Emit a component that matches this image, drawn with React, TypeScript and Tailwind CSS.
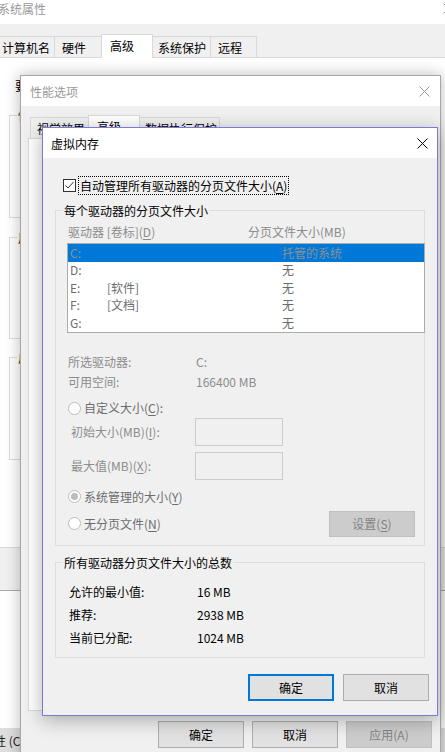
import React from 'react';

// Windows 10 "虚拟内存" dialog stacked on 性能选项 and 系统属性

function CloseX({ color }: { color: string }) {
  return (
    <svg width="11" height="11" viewBox="0 0 11 11" className="shrink-0">
      <path d="M0.5 0.5 L10.5 10.5 M10.5 0.5 L0.5 10.5" stroke={color} strokeWidth="1" fill="none" />
    </svg>
  );
}

function Checkbox() {
  return (
    <svg width="13" height="13" viewBox="0 0 13 13" className="shrink-0">
      <rect x="0.5" y="0.5" width="12" height="12" fill="#ffffff" stroke="#333333" />
      <path d="M2.5 6.5 L5 9 L10.5 3" fill="none" stroke="#333333" strokeWidth="1" />
    </svg>
  );
}

function Radio({ checked = false }: { checked?: boolean }) {
  return (
    <svg width="13" height="13" viewBox="0 0 13 13" className="shrink-0">
      <circle cx="6.5" cy="6.5" r="6" fill="#ffffff" stroke="#bcbcbc" />
      {checked && <circle cx="6.5" cy="6.5" r="3.5" fill="#bcbcbc" />}
    </svg>
  );
}

function Key({ k }: { k: string }) {
  return <span className="underline underline-offset-2 decoration-1">{k}</span>;
}

interface TabProps {
  label: string;
  width: string;
  pad: string;
  selected?: boolean;
  first?: boolean;
}

function Tab({ label, width, pad, selected, first }: TabProps) {
  return (
    <div
      className={`${width} ${pad} ${first ? '' : '-ml-[1px]'} flex items-center border-t border-l border-r border-[#d9d9d9] leading-[17px] ${
        selected ? 'relative z-10 h-[24px] -mb-[1px] bg-white pb-[3px]' : 'h-[21px] bg-[#f0f0f0]'
      }`}
    >
      {label}
    </div>
  );
}

const drives = [
  { letter: 'C:', label: '', size: '托管的系统', selected: true },
  { letter: 'D:', label: '', size: '无' },
  { letter: 'E:', label: '[软件]', size: '无' },
  { letter: 'F:', label: '[文档]', size: '无' },
  { letter: 'G:', label: '', size: '无' },
];

const totals = [
  { label: '允许的最小值:', value: '16 MB' },
  { label: '推荐:', value: '2938 MB' },
  { label: '当前已分配:', value: '1024 MB' },
];

function SystemProperties() {
  return (
    <div className="absolute z-[1] left-[-12px] top-[-6px] w-[470px] h-[597px] border border-[#aaaaaa] bg-[#f0f0f0] flex flex-col">
      <div className="h-[29px] bg-white flex items-center justify-between pl-[9px] pr-[3px] pb-[3px]">
        <span className="text-[#999999] leading-[17px]">系统属性</span>
        <CloseX color="#999999" />
      </div>
      <div className="h-[33px] flex items-end pl-[5px] text-black">
        <Tab label="计算机名" width="w-[61px]" pad="pl-[7px]" first />
        <Tab label="硬件" width="w-[48px]" pad="pl-[7px]" />
        <Tab label="高级" width="w-[52px]" pad="pl-[8px]" selected />
        <Tab label="系统保护" width="w-[59px]" pad="pl-[5px]" />
        <Tab label="远程" width="w-[47px]" pad="pl-[7px]" />
      </div>
      <div className="mx-[5px] h-[491px] border border-[#d9d9d9] bg-white flex flex-col pl-[14px] pr-[14px] pt-[19px]">
        <div className="pl-[6px] leading-[17px] text-black whitespace-nowrap">要进行大多数更改，你必须作为管理员登录。</div>
        <div className="relative mt-[21px] h-[103px] border border-[#dcdcdc]">
          <span className="absolute left-[7px] top-[-9px] bg-white px-[1px] leading-[17px]">性能</span>
        </div>
        <div className="relative mt-[19px] h-[102px] border border-[#dcdcdc]">
          <span className="absolute left-[7px] top-[-9px] bg-white px-[1px] leading-[17px]">用户配置文件</span>
        </div>
        <div className="relative mt-[18px] h-[103px] border border-[#dcdcdc]">
          <span className="absolute left-[7px] top-[-9px] bg-white px-[1px] leading-[17px]">启动和故障恢复</span>
        </div>
      </div>
    </div>
  );
}

function PerformanceOptions() {
  return (
    <div className="absolute z-[2] left-[20px] top-[75px] w-[421px] h-[700px] border border-[#a6a6a6] bg-[#f0f0f0] shadow-[0_0_14px_rgba(0,0,0,0.28)] flex flex-col">
      <div className="h-[30px] shrink-0 bg-white flex items-center justify-between pl-[9px] pr-[10px]">
        <span className="text-[#999999] leading-[17px]">性能选项</span>
        <CloseX color="#999999" />
      </div>
      <div className="h-[32px] shrink-0 flex items-end pl-[9px] text-black">
        <Tab label="视觉效果" width="w-[59px]" pad="pl-[6px]" first />
        <Tab label="高级" width="w-[52px]" pad="pl-[8px]" selected />
        <Tab label="数据执行保护" width="w-[81px]" pad="pl-[5px]" />
      </div>
      <div className="ml-[7px] w-[405px] h-[573px] shrink-0 border border-[#d9d9d9] bg-white" />
      <div className="mt-[10px] flex justify-end gap-[8px] pr-[8px]">
        <button className="w-[86px] h-[27px] border border-[#adadad] bg-[#e1e1e1] text-black">确定</button>
        <button className="w-[86px] h-[27px] border border-[#adadad] bg-[#e1e1e1] text-black">取消</button>
        <button className="w-[86px] h-[27px] border border-[#bfbfbf] bg-[#cccccc] text-[#838383]">应用(A)</button>
      </div>
    </div>
  );
}

function VirtualMemory() {
  return (
    <div className="absolute z-[3] left-[42px] top-[127px] w-[396px] h-[589px] border border-[#7a7ad8] bg-[#f0f0f0] shadow-[0_4px_18px_rgba(0,0,0,0.3)] flex flex-col">
      <div className="h-[30px] shrink-0 bg-white flex items-center justify-between pl-[8px] pr-[9px]">
        <span className="text-black leading-[17px]">虚拟内存</span>
        <CloseX color="#000000" />
      </div>

      {/* auto manage checkbox */}
      <div className="mt-[18px] h-[19px] pl-[20px] flex items-center gap-[2px]">
        <Checkbox />
        <span className="border border-dotted border-black px-[1px] leading-[17px] text-black">
          自动管理所有驱动器的分页文件大小(<Key k="A" />)
        </span>
      </div>

      {/* per drive group */}
      <div className="relative mt-[15px] ml-[12px] w-[370px] h-[336px] shrink-0 border border-[#dcdcdc] flex flex-col pl-[11px] pt-[12px]">
        <span className="absolute left-[7px] top-[-9px] bg-[#f0f0f0] px-[1px] leading-[17px] text-black">
          每个驱动器的分页文件大小
        </span>
        <div className="h-[18px] flex items-center pl-[1px] text-[#8c8c8c]">
          <span className="w-[180px]">驱动器 [卷标](<Key k="D" />)</span>
          <span>分页文件大小(MB)</span>
        </div>
        <div className="mt-[2px] w-[358px] border border-[#acacac] bg-white">
          {drives.map((d) => (
            <div
              key={d.letter}
              className={`h-[17.5px] flex items-center pl-[2px] ${
                d.selected ? 'bg-[#0078d7] text-[#8f8f8f]' : 'text-[#6d6d6d]'
              }`}
            >
              <span className="w-[37px]">{d.letter}</span>
              <span className="w-[175px]">{d.label}</span>
              <span>{d.size}</span>
            </div>
          ))}
        </div>

        <div className="mt-[19px] h-[20px] flex items-center pl-[1px] text-[#8c8c8c]">
          <span className="w-[128px]">所选驱动器:</span>
          <span>C:</span>
        </div>
        <div className="h-[20px] flex items-center pl-[1px] text-[#8c8c8c]">
          <span className="w-[128px]">可用空间:</span>
          <span>166400 MB</span>
        </div>

        <div className="mt-[7px] h-[19px] flex items-center gap-[3px] pl-[1px] text-[#6d6d6d]">
          <Radio />
          <span>
            自定义大小(<Key k="C" />):
          </span>
        </div>
        <div className="h-[28px] flex items-center text-[#8c8c8c]">
          <span className="w-[128px] pl-[4px]">
            初始大小(MB)(<Key k="I" />):
          </span>
          <div className="w-[88px] h-[28px] border border-[#cccccc] bg-[#f0f0f0]" />
        </div>
        <div className="mt-[6px] h-[28px] flex items-center text-[#8c8c8c]">
          <span className="w-[128px] pl-[4px]">
            最大值(MB)(<Key k="X" />):
          </span>
          <div className="w-[88px] h-[28px] border border-[#cccccc] bg-[#f0f0f0]" />
        </div>

        <div className="mt-[7px] h-[20px] flex items-center gap-[3px] pl-[1px] text-[#6d6d6d]">
          <Radio checked />
          <span>
            系统管理的大小(<Key k="Y" />)
          </span>
        </div>
        <div className="mt-[4px] h-[26px] flex items-center pl-[1px] pr-[9px] text-[#6d6d6d]">
          <Radio />
          <span className="ml-[3px]">
            无分页文件(<Key k="N" />)
          </span>
          <button className="ml-auto w-[86px] h-[26px] border border-[#bfbfbf] bg-[#cccccc] text-[#838383]">
            设置(<Key k="S" />)
          </button>
        </div>
      </div>

      {/* totals group */}
      <div className="relative mt-[16px] ml-[12px] w-[370px] h-[96px] shrink-0 border border-[#dcdcdc] flex flex-col pl-[13px] pt-[17px] text-black">
        <span className="absolute left-[7px] top-[-9px] bg-[#f0f0f0] px-[1px] leading-[17px]">
          所有驱动器分页文件大小的总数
        </span>
        {totals.map((t) => (
          <div key={t.label} className="h-[23px] flex items-center">
            <span className="w-[128px]">{t.label}</span>
            <span>{t.value}</span>
          </div>
        ))}
      </div>

      <div className="mt-[16px] flex justify-end gap-[9px] pr-[8px]">
        <button className="w-[86px] h-[27px] border-2 border-[#0078d7] bg-[#e1e1e1] text-black">确定</button>
        <button className="w-[86px] h-[27px] border border-[#adadad] bg-[#e1e1e1] text-black">取消</button>
      </div>
    </div>
  );
}

export default function App() {
  return (
    <div className="relative w-[445px] h-[752px] overflow-hidden bg-white text-[12px] font-['Noto_Sans_CJK_SC','Noto_Sans',sans-serif]">
      {/* window behind everything */}
      <div className="absolute z-0 inset-0 bg-white flex flex-col justify-end">
        <div className="h-[24px] bg-[#dedede] flex items-center text-[#222222]">
          <span className="-ml-[6px] whitespace-nowrap leading-[17px]">性 (C:)</span>
        </div>
      </div>
      <SystemProperties />
      <PerformanceOptions />
      <VirtualMemory />
    </div>
  );
}
